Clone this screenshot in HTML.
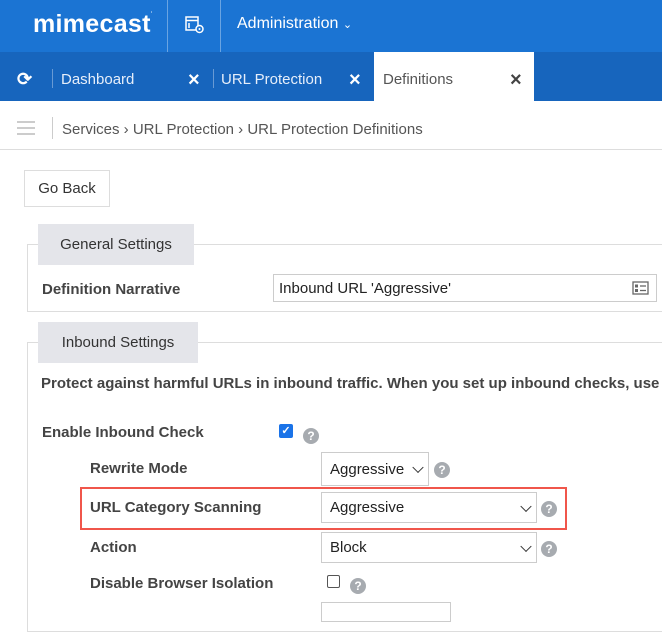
<!DOCTYPE html>
<html><head><style>
*{margin:0;padding:0;box-sizing:border-box}
body{width:662px;height:605px;overflow:hidden;background:#fff;font-family:"Liberation Sans",sans-serif;color:#333;font-size:15px;position:relative}
.a{position:absolute;white-space:nowrap}
.hdr{left:0;top:0;width:662px;height:52px;background:#1b74d3}
.tabs{left:0;top:52px;width:662px;height:49px;background:#1765bd}
.w{color:#fff}
.sep{background:rgba(255,255,255,.35);width:1px}
.x{font-size:20px;color:#fff;font-weight:bold}
.legend{background:#e4e5ea;color:#333;font-size:15px;display:flex;align-items:center;justify-content:center}
.box{border:1px solid #ddd}
.sel{border:1px solid #ccc;background:#fff;font-size:15px;color:#222;padding-left:8px;display:flex;align-items:center}
.chev{position:absolute;right:6px;top:50%;width:8px;height:8px;border-right:1.5px solid #333;border-bottom:1.5px solid #333;transform:translateY(-70%) rotate(45deg)}
.q{width:16px;height:16px;border-radius:50%;background:#a7abb0;color:#fff;font-size:12px;font-weight:bold;text-align:center;line-height:16px}
.cb{width:13px;height:13px;border:1px solid #555;border-radius:2px;background:#fff}
.lb{font-weight:bold;color:#444}
</style></head><body>
<div class="a hdr"></div>
<div class="a w" style="left:33px;top:10px;font-size:25px;font-weight:bold;letter-spacing:0.3px">mimecast<span style="font-size:6px;vertical-align:top">·</span></div>
<div class="a sep" style="left:167px;top:0;height:52px"></div>
<div class="a sep" style="left:220px;top:0;height:52px"></div>
<svg class="a" style="left:185px;top:16px" width="20" height="18" viewBox="0 0 20 18"><rect x="1" y="1" width="12" height="13" fill="none" stroke="#fff" stroke-width="1.5"/><line x1="1" y1="4.5" x2="13" y2="4.5" stroke="#fff" stroke-width="1.5"/><line x1="4" y1="7" x2="4" y2="12" stroke="#fff" stroke-width="1.5"/><circle cx="14.5" cy="13" r="3.5" fill="#1b74d3" stroke="#fff" stroke-width="1.5"/><circle cx="14.5" cy="13" r="1" fill="#fff"/></svg>
<div class="a w" style="left:237px;top:15px;font-size:16px">Administration <span style="font-size:11px">&#8964;</span></div>
<div class="a tabs"></div>
<div class="a w" style="left:17px;top:69px;font-size:18px;font-weight:bold">&#10227;</div>
<div class="a sep" style="left:52px;top:69px;height:19px"></div>
<div class="a w" style="left:61px;top:71px;font-size:15px;color:#e6eefa">Dashboard</div>
<div class="a x" style="left:188px;top:69px">×</div>
<div class="a sep" style="left:213px;top:69px;height:19px"></div>
<div class="a w" style="left:221px;top:71px;font-size:15px;color:#e6eefa">URL Protection</div>
<div class="a x" style="left:349px;top:69px">×</div>
<div class="a" style="left:374px;top:52px;width:160px;height:49px;background:#fff"></div>
<div class="a" style="left:383px;top:71px;font-size:15px;color:#555">Definitions</div>
<div class="a" style="left:510px;top:69px;font-size:20px;font-weight:bold;color:#444">×</div>
<div class="a" style="left:17px;top:121px;width:18px;height:2px;background:#ccc;box-shadow:0 6px 0 #ccc,0 12px 0 #ccc"></div>
<div class="a" style="left:52px;top:117px;width:1px;height:22px;background:#ccc"></div>
<div class="a" style="left:62px;top:121px;font-size:15px;color:#555">Services &#8250; URL Protection &#8250; URL Protection Definitions</div>
<div class="a" style="left:0;top:149px;width:662px;height:1px;background:#ddd"></div>
<div class="a box" style="left:24px;top:170px;width:86px;height:37px;display:flex;align-items:center;justify-content:center;font-size:15px">Go Back</div>
<div class="a box" style="left:27px;top:244px;width:650px;height:68px"></div>
<div class="a legend" style="left:38px;top:224px;width:156px;height:41px">General Settings</div>
<div class="a lb" style="left:42px;top:281px">Definition Narrative</div>
<div class="a sel" style="left:273px;top:274px;width:384px;height:28px;padding-left:5px">Inbound URL 'Aggressive'</div>
<svg class="a" style="left:632px;top:281px" width="17" height="14"><rect x="1" y="1" width="15" height="12" fill="none" stroke="#666" stroke-width="1.3"/><rect x="3" y="3.5" width="3" height="3" fill="#666"/><rect x="3" y="8" width="3" height="3" fill="#666"/><line x1="8" y1="5" x2="14" y2="5" stroke="#666" stroke-width="1.3"/><line x1="8" y1="9.5" x2="14" y2="9.5" stroke="#666" stroke-width="1.3"/></svg>
<div class="a box" style="left:27px;top:342px;width:650px;height:290px"></div>
<div class="a legend" style="left:38px;top:322px;width:160px;height:41px">Inbound Settings</div>
<div class="a lb" style="left:41px;top:375px">Protect against harmful URLs in inbound traffic. When you set up inbound checks, use</div>
<div class="a lb" style="left:42px;top:424px">Enable Inbound Check</div>
<div class="a" style="left:279px;top:424px;width:14px;height:14px;background:#1a73e8;border-radius:2px;color:#fff;font-size:11px;text-align:center;line-height:14px;font-weight:bold">✓</div>
<div class="a q" style="left:303px;top:428px">?</div>
<div class="a lb" style="left:90px;top:460px">Rewrite Mode</div>
<div class="a sel" style="left:321px;top:452px;width:108px;height:34px">Aggressive<span class="chev"></span></div>
<div class="a q" style="left:434px;top:462px">?</div>
<div class="a" style="left:80px;top:487px;width:487px;height:43px;border:2px solid #f0564b"></div>
<div class="a lb" style="left:90px;top:499px">URL Category Scanning</div>
<div class="a sel" style="left:321px;top:492px;width:216px;height:31px">Aggressive<span class="chev"></span></div>
<div class="a q" style="left:541px;top:501px">?</div>
<div class="a lb" style="left:90px;top:539px">Action</div>
<div class="a sel" style="left:321px;top:532px;width:216px;height:31px">Block<span class="chev"></span></div>
<div class="a q" style="left:541px;top:541px">?</div>
<div class="a lb" style="left:90px;top:575px">Disable Browser Isolation</div>
<div class="a cb" style="left:327px;top:575px"></div>
<div class="a q" style="left:350px;top:578px">?</div>
<div class="a" style="left:321px;top:602px;width:130px;height:20px;border:1px solid #ccc"></div>
</body></html>
